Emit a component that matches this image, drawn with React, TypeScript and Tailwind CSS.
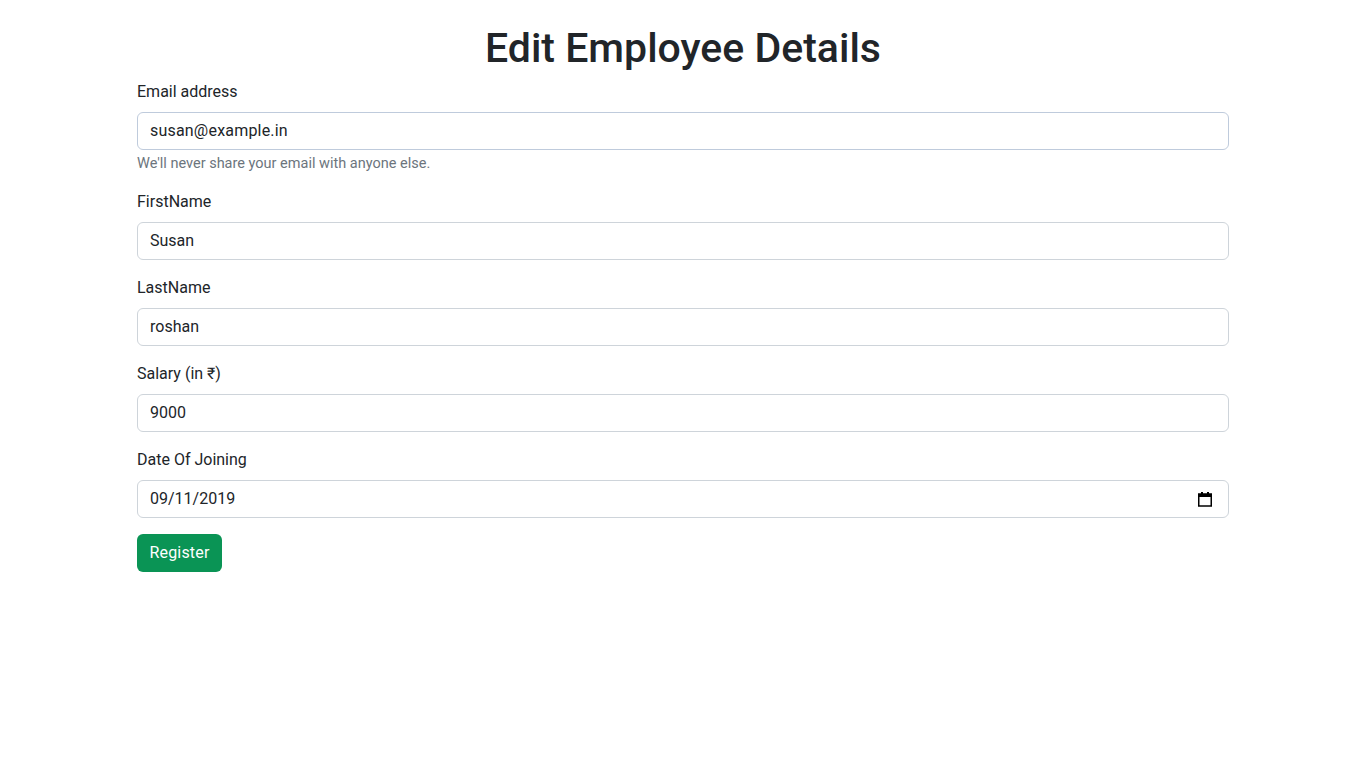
import React from "react";

const font = { fontFamily: "Roboto, Lato, sans-serif" };

function Field({ label, value }: { label: string; value: string }) {
  return (
    <div className="mb-4">
      <div className="mb-2 h-6 text-[16px] leading-6 text-[#212529]">{label}</div>
      <div className="flex h-[38px] items-center rounded-[6px] border border-[#ced4da] px-3 text-[16px] text-[#212529]">
        {value}
      </div>
    </div>
  );
}

export default function App() {
  return (
    <div className="min-h-[768px] bg-white" style={font}>
      <div className="mx-auto w-[1092px]">
        <h1 className="mt-6 mb-2 h-12 text-center text-[41px] font-medium leading-[48px] text-[#212529]">
          Edit Employee Details
        </h1>
        <div className="mb-2 h-6 text-[16px] leading-6 text-[#212529]">Email address</div>
        <div className="flex h-[38px] items-center rounded-[6px] border border-[#bfcbdc] px-3 text-[16px] tracking-[0.2px] text-[#212529]">
          susan@example.in
        </div>
        <div className="mt-1 mb-4 h-5 text-[14.5px] leading-5 text-[#6c757d]">
          We'll never share your email with anyone else.
        </div>
        <Field label="FirstName" value="Susan" />
        <Field label="LastName" value="roshan" />
        <Field label="Salary (in ₹)" value="9000" />
        <div className="mb-4">
          <div className="mb-2 h-6 text-[16px] leading-6 text-[#212529]">Date Of Joining</div>
          <div className="flex h-[38px] items-center justify-between rounded-[6px] border border-[#ced4da] pl-3 pr-4 text-[16px] text-[#212529]">
            <span>09/11/2019</span>
            <svg width="14" height="15" viewBox="0 0 14 15">
              <rect x="3" y="0" width="2" height="3" fill="#000" />
              <rect x="9" y="0" width="2" height="3" fill="#000" />
              <rect x="0.75" y="2" width="12.5" height="12" fill="none" stroke="#000" strokeWidth="1.5" />
              <rect x="0.75" y="2" width="12.5" height="3" fill="#000" />
            </svg>
          </div>
        </div>
        <button className="h-[38px] w-[85px] rounded-[6px] bg-[#0a9455] text-center text-[16px] tracking-[0.2px] text-white">
          Register
        </button>
      </div>
    </div>
  );
}
